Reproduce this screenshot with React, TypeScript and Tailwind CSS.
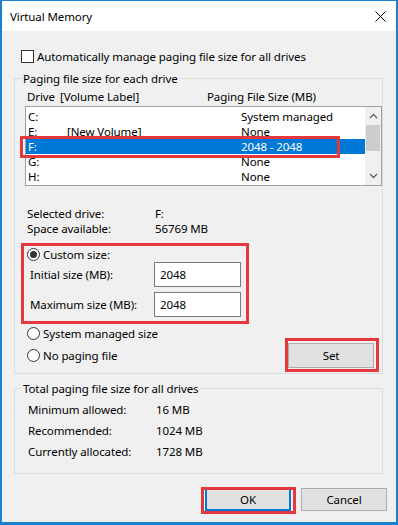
import React from "react";

const Radio = ({ checked }: { checked?: boolean }) => (
  <span className="w-[13px] h-[13px] rounded-full border border-[#333333] bg-white flex items-center justify-center shrink-0">
    {checked && <span className="w-[7px] h-[7px] rounded-full bg-[#333333]" />}
  </span>
);

const rows = [
  { d: "C:", l: "", s: "System managed" },
  { d: "E:", l: "[New Volume]", s: "None" },
  { d: "F:", l: "", s: "2048 - 2048", sel: true },
  { d: "G:", l: "", s: "None" },
  { d: "H:", l: "", s: "None" },
];

export default function App() {
  return (
    <div
      className="relative w-[398px] h-[525px] bg-[#f0f0f0] border-x-2 border-t border-b-[3px] border-[#1b7fd2] text-[11.5px] tracking-[-0.1px] leading-[15px] text-black overflow-hidden"
      style={{ fontFamily: '"Noto Sans", "Open Sans", sans-serif' }}
    >
      {/* Title bar */}
      <div className="h-[30px] bg-white flex items-center justify-between pl-[8px] pr-[10px]">
        <span>Virtual Memory</span>
        <svg width="11" height="11" viewBox="0 0 11 11">
          <path d="M0.5 0.5 L10.5 10.5 M10.5 0.5 L0.5 10.5" stroke="#000" strokeWidth="1" />
        </svg>
      </div>

      {/* Checkbox */}
      <div className="mt-[18px] ml-[19px] flex items-center h-[15px]">
        <span className="w-[13px] h-[13px] border border-[#333333] bg-white shrink-0" />
        <span className="ml-[3px]">Automatically manage paging file size for all drives</span>
      </div>

      {/* Group 1 */}
      <div className="relative mt-[14px] ml-[12px] w-[369px] h-[296px] border border-[#dcdcdc]">
        <span className="absolute -top-[8px] left-[7px] px-[1px] bg-[#f0f0f0]">Paging file size for each drive</span>
        <div className="mt-[10px] flex h-[15px]">
          <span className="ml-[12px] w-[33px]">Drive</span>
          <span className="w-[147px]">[Volume Label]</span>
          <span>Paging File Size (MB)</span>
        </div>
        <div className="mt-[2px] ml-[10px] w-[357px] h-[80px] border border-[#a0a0a0] bg-white flex">
          <div className="flex-1 pt-[2px]">
            {rows.map((r) => (
              <div
                key={r.d}
                className={
                  r.sel
                    ? "h-[15px] flex bg-[#0078d7] text-white"
                    : "h-[15px] flex"
                }
              >
                <span className="w-[41px] pl-[2px]">{r.d}</span>
                <span className="w-[174px]">{r.l}</span>
                <span>{r.s}</span>
              </div>
            ))}
          </div>
          <div className="w-[16px] bg-[#f0f0f0] flex flex-col items-center">
            <div className="h-[18px] flex items-center justify-center">
              <svg width="9" height="6" viewBox="0 0 9 6">
                <path d="M1 5 L4.5 1.5 L8 5" stroke="#606060" strokeWidth="1.3" fill="none" />
              </svg>
            </div>
            <div className="w-[14px] h-[26px] bg-[#cdcdcd]" />
            <div className="flex-1" />
            <div className="h-[18px] flex items-center justify-center">
              <svg width="9" height="6" viewBox="0 0 9 6">
                <path d="M1 1 L4.5 4.5 L8 1" stroke="#606060" strokeWidth="1.3" fill="none" />
              </svg>
            </div>
          </div>
        </div>

        <div className="mt-[20px] ml-[12px] flex">
          <span className="w-[128px]">Selected drive:</span>
          <span>F:</span>
        </div>
        <div className="ml-[12px] flex">
          <span className="w-[128px]">Space available:</span>
          <span>56769 MB</span>
        </div>

        <div className="mt-[11px] ml-[12px] flex items-center h-[15px]">
          <Radio checked />
          <span className="ml-[3px]">Custom size:</span>
        </div>
        <div className="ml-[15px] flex items-center h-[25px]">
          <span className="w-[124px]">Initial size (MB):</span>
          <span className="w-[87px] h-[25px] border border-[#7a7a7a] bg-white pl-[5px] flex items-center">2048</span>
        </div>
        <div className="mt-[5px] ml-[15px] flex items-center h-[25px]">
          <span className="w-[124px]">Maximum size (MB):</span>
          <span className="w-[87px] h-[25px] border border-[#7a7a7a] bg-white pl-[5px] flex items-center">2048</span>
        </div>

        <div className="flex justify-between items-end pr-[8px]">
          <div className="ml-[12px]">
            <div className="mt-[9px] flex items-center h-[15px]">
              <Radio />
              <span className="ml-[3px]">System managed size</span>
            </div>
            <div className="mt-[7px] flex items-center h-[15px]">
              <Radio />
              <span className="ml-[3px]">No paging file</span>
            </div>
          </div>
          <button className="w-[86px] h-[25px] mb-[-5px] bg-[#e1e1e1] border border-[#adadad] flex items-center justify-center">
            Set
          </button>
        </div>
      </div>

      {/* Group 2 */}
      <div className="relative mt-[14px] ml-[12px] w-[369px] h-[86px] border border-[#dcdcdc] pt-[10px]">
        <span className="absolute -top-[8px] left-[7px] px-[1px] bg-[#f0f0f0]">Total paging file size for all drives</span>
        {[
          ["Minimum allowed:", "16 MB"],
          ["Recommended:", "1024 MB"],
          ["Currently allocated:", "1728 MB"],
        ].map(([a, b]) => (
          <div key={a} className="h-[21px] flex items-center ml-[13px]">
            <span className="w-[128px]">{a}</span>
            <span>{b}</span>
          </div>
        ))}
      </div>

      {/* Buttons */}
      <div className="mt-[14px] flex justify-end gap-[10px] pr-[9px]">
        <button className="w-[86px] h-[23px] bg-[#e1e1e1] border-2 border-[#0078d7] flex items-center justify-center">OK</button>
        <button className="w-[86px] h-[23px] bg-[#e1e1e1] border border-[#adadad] flex items-center justify-center">Cancel</button>
      </div>

      {/* Red annotation boxes */}
      <div className="absolute left-[18px] top-[135px] w-[320px] h-[22px] border-[3px] border-[#e4383d]" />
      <div className="absolute left-[19px] top-[242px] w-[228px] h-[81px] border-[3px] border-[#e4383d]" />
      <div className="absolute left-[283px] top-[337px] w-[94px] h-[34px] border-[3px] border-[#e4383d]" />
      <div className="absolute left-[199px] top-[486px] w-[95px] h-[27px] border-[3px] border-[#e4383d]" />
    </div>
  );
}
